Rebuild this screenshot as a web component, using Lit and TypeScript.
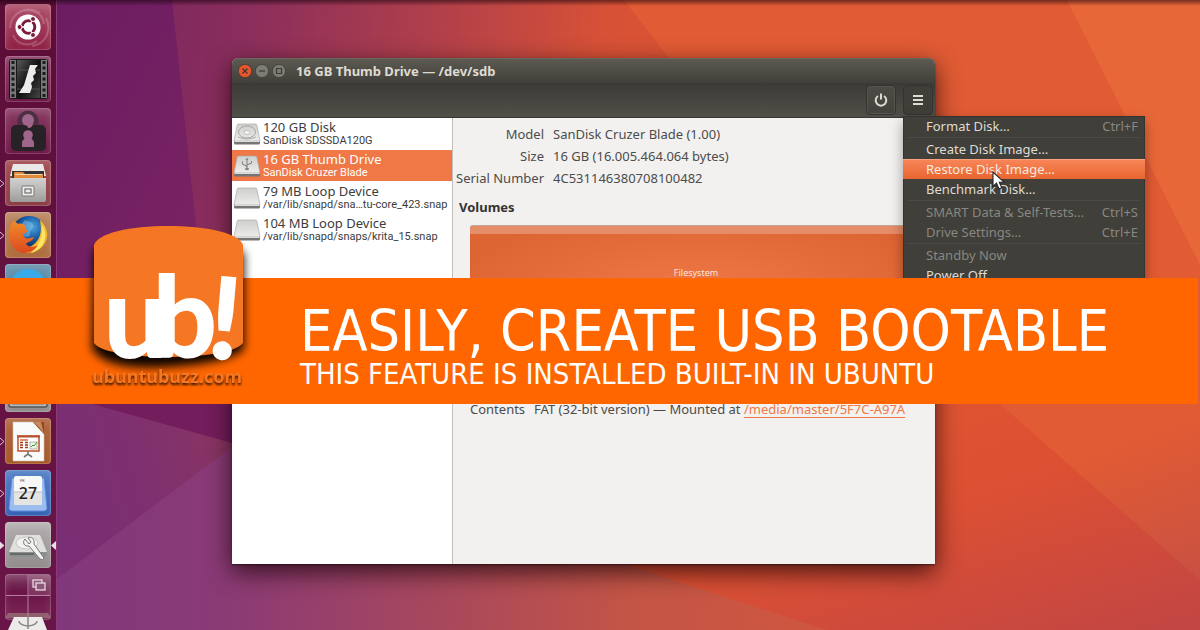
import { LitElement, html, css, svg, TemplateResult } from "lit";
import { customElement } from "lit/decorators.js";
import { classMap } from "lit/directives/class-map.js";

interface Launcher {
  label: string;
  tone: string;
  art: TemplateResult;
  running?: boolean;
  active?: boolean;
}

interface Disk {
  name: string;
  detail: string;
  kind: "hdd" | "usb" | "loop";
  selected?: boolean;
}

interface MenuEntry {
  label: string;
  keys?: string;
  disabled?: boolean;
  hover?: boolean;
  first?: boolean;
}

const dashArt = svg`
  <g fill="none" stroke="#fff" stroke-width="2" opacity=".2">
    <path d="M5 24C6 8 22 1 35 9M41 14c6 12 0 26-14 28M8 31c4 10 16 12 24 6M14 8c10-5 24 0 25 12"/>
  </g>
  <circle cx="23" cy="23" r="12.600" fill="#fff"/>
  <circle cx="23.500" cy="23" r="6.300" fill="none" stroke="#7a1c3e" stroke-width="3"/>
  <g stroke="#fff" stroke-width="1.400"><path d="M23.500 23H12M23.500 23L29 13.500M23.500 23L29 32.500"/></g>
  <circle cx="23.500" cy="23" r="4.600" fill="#fff"/>
  <g fill="#7a1c3e" stroke="#fff" stroke-width="1"><circle cx="14.600" cy="23" r="2.500"/><circle cx="28" cy="15" r="2.500"/><circle cx="28" cy="31" r="2.500"/></g>`;

const filmArt = svg`
  <rect x="4" y="3" width="39" height="40" rx="3" fill="#181818"/>
  <rect x="12" y="4" width="23" height="38" fill="url(#film)"/>
  <g fill="#77797b"><rect x="5" y="4" width="6" height="38"/><rect x="36" y="4" width="6" height="38"/></g>
  <g stroke="#1b1b1b" stroke-width="3" stroke-dasharray="3 2.500"><path d="M8 5v36M39 5v36"/></g>
  <path d="M12 14h23M12 33h23" stroke="#555" stroke-width=".8"/>
  <path d="M25 9h8l-3 4 1 4-3 3 1 4-3 3 1 4-2 6H14l5-8Z" fill="#ececea"/>`;

const lockArt = svg`
  <path d="M15 20v-6c0-12 16-12 16 0v6" fill="none" stroke="#4c2f42" stroke-width="5"/>
  <rect x="6" y="17" width="35" height="26" rx="5" fill="#262225"/>
  <circle cx="23" cy="12" r="6" fill="#a0658a"/><path d="m22 16 6-1c0 3-2 5-5 5Z" fill="#a0658a"/>
  <circle cx="23" cy="27" r="4.800" fill="#a0658a"/>
  <path d="M17 39v-4c0-3 3-4 3-6h6c0 2 3 3 3 6v4Z" fill="#a0658a"/>`;

const filesArt = svg`
  <path d="M8 4h30l3 12H5Z" fill="#e9e9e7"/>
  <rect x="7" y="11" width="32" height="9" fill="#333"/>
  <path d="M9 12h9l2 2h18v6H9Z" fill="#e28a3c"/><path d="M10 14h27v1H10Z" fill="#f8d9ae"/>
  <path d="M5 18h36v22q0 2-2 2H7q-2 0-2-2Z" fill="url(#steel)"/>
  <rect x="17" y="26" width="12" height="10" rx="1" fill="#eee" stroke="#777"/>
  <rect x="20" y="29" width="6" height="4" fill="none" stroke="#777" stroke-width="1.300"/>`;

const foxArt = svg`
  <circle cx="24" cy="22" r="18" fill="url(#globe)"/>
  <path d="M20 8c3 2 7 1 8 5s-4 5-3 9-7 4-9 0 0-10 4-14Z" fill="#8cc8ec" opacity=".45"/>
  <path d="M35 8c8 6 10 18 3 26-8 9-23 9-30-1 8 5 14 4 20 0 8-6 9-14 7-25Z" fill="#fbb82a"/>
  <path d="M37 13c4 6 4 13 1 19-3 5-8 8-12 9 7-7 12-15 11-28Z" fill="#fde56a"/>
  <path d="M8 9c2 0 4 2 5 3 3-1 6 0 8 2-1 2 0 4 2 5-2 2-5 2-5 4 1 3 4 4 7 3 2-1 4-1 4 0-3 4-7 4-8 6 3 4 9 3 12 1-4 8-16 11-23 4C3 31 1 19 8 9Z" fill="url(#fox)"/>`;

const skyArt = svg`<circle cx="23" cy="23" r="18" fill="#39a9e8"/>`;

const trayArt = svg`<rect x="4" y="6" width="38" height="35" rx="2" fill="#b9b9b7" stroke="#555" stroke-width="1.500"/><rect x="7" y="9" width="32" height="29" fill="none" stroke="#777"/>`;

const impressArt = svg`
  <path d="M8 4h20l11 12v27H8Z" fill="#fafafa" stroke="#c9c4bf" stroke-width=".6"/>
  <path d="M28 4h11v12Z" fill="#8f4a20"/><path d="M28 4q6 4 11 12l-3-12Z" fill="#c98a5e"/>
  <rect x="13" y="18" width="21" height="15" fill="#fff" stroke="#b9502d" stroke-width="1.500"/>
  <path d="M12 18.500h23" stroke="#b9502d" stroke-width="2"/>
  <g stroke-width="1.500"><path d="M15 22h8" stroke="#d66b3e"/><path d="M15 24.500h3M15 27h3M15 29.500h3M20 24.500h3M20 27h3M20 29.500h3" stroke="#a3361d"/></g>
  <rect x="25" y="24" width="7" height="7" fill="#eef7e6" stroke="#888" stroke-width=".6"/><path d="m26 29 2-2 1 1 3-4" fill="none" stroke="#3d9b38"/>
  <path d="M23 33v3m-4 3 4-3 4 3" fill="none" stroke="#777" stroke-width="1.600"/>`;

const calendarArt = svg`
  <path d="M7 8h32l3 30q0 3-3 3H7q-3 0-3-3Z" fill="#9bbdf0" stroke="#5b8ad8"/>
  <rect x="9" y="6" width="28" height="29" rx="2" fill="#f7f7f5"/>
  <path d="M9 22h28v11q0 2-2 2H11q-2 0-2-2Z" fill="#e4e4e2"/><path d="M9 22h28" stroke="#bbb"/>
  <text x="23" y="29" text-anchor="middle" font-family="Noto Sans, sans-serif" font-size="16" font-weight="500" fill="#222">27</text>
  <text x="15" y="12" font-family="Noto Sans, sans-serif" font-size="4" fill="#555">FR</text>`;

const disksArt = svg`
  <path d="M11 13h24l7 17v5H4v-5Z" fill="#e0e0de"/>
  <path d="M4 30h38v4q0 1-1 1H5q-1 0-1-1Z" fill="#8d9090"/><path d="M5 32h24" stroke="#444"/>
  <ellipse cx="22" cy="21" rx="11" ry="6" fill="#f2f2f0" stroke="#bbb" stroke-width=".8"/>
  <path d="M20 17c-3 3-1 8 4 7l11 13q3 2 4-1L29 22c1-5-3-8-6-6l3 4-2 2Z" fill="#f3f3f1" stroke="#777" stroke-width="1"/>`;

const workspaceArt = svg`
  <path d="M1 21.500h44M23 1v44" stroke="#b77fa0" stroke-width="1"/>
  <rect x="24" y="1" width="21" height="20" fill="#fff" opacity=".14"/>
  <g stroke="#e9d8e2" stroke-width="1.300" fill="#8d5778"><rect x="28" y="6" width="9" height="7"/><rect x="31" y="9" width="9" height="7"/></g>`;

const groups: Launcher[][] = [
  [
    { label: "Search your computer", tone: "dash", art: dashArt },
    { label: "Video editor", tone: "plum", art: filmArt },
    { label: "Passwords", tone: "plum", art: lockArt },
    { label: "Files", tone: "brick", art: filesArt, running: true },
    { label: "Firefox", tone: "tan", art: foxArt, running: true },
    { label: "Browser", tone: "sky", art: skyArt },
    { label: "Software", tone: "grey", art: trayArt },
  ],
  [
    { label: "Files tray", tone: "grey", art: trayArt },
    { label: "Impress", tone: "rust", art: impressArt, running: true },
    { label: "Calendar", tone: "blue", art: calendarArt, running: true },
    { label: "Disks", tone: "grey", art: disksArt, running: true, active: true },
    { label: "Workspaces", tone: "work", art: workspaceArt },
  ],
];

const disks: Disk[] = [
  { name: "120 GB Disk", detail: "SanDisk SDSSDA120G", kind: "hdd" },
  { name: "16 GB Thumb Drive", detail: "SanDisk Cruzer Blade", kind: "usb", selected: true },
  { name: "79 MB Loop Device", detail: "/var/lib/snapd/sna…tu-core_423.snap", kind: "loop" },
  { name: "104 MB Loop Device", detail: "/var/lib/snapd/snaps/krita_15.snap", kind: "loop" },
];

const menu: MenuEntry[] = [
  { label: "Format Disk…", keys: "Ctrl+F" },
  { label: "Create Disk Image…", first: true },
  { label: "Restore Disk Image…", hover: true },
  { label: "Benchmark Disk…" },
  { label: "SMART Data & Self-Tests…", keys: "Ctrl+S", disabled: true, first: true },
  { label: "Drive Settings…", keys: "Ctrl+E", disabled: true },
  { label: "Standby Now", disabled: true, first: true },
  { label: "Power Off…" },
];

const driveIcon = (kind: Disk["kind"]) => html`
  <svg class="drive" viewBox="0 0 28 24" aria-hidden="true">
    <defs><linearGradient id="lid" x2="0" y2="1"><stop stop-color="#cfcfcd"/><stop offset="1" stop-color="#ececea"/></linearGradient></defs>
    <path d="M1 18h26v3q0 1.500-1.500 1.500h-23Q1 22.500 1 21Z" fill="#757573"/>
    <path d="M5.500 2h17q1 0 1.300 1L27 19H1L4.200 3q.3-1 1.300-1Z" fill="url(#lid)" stroke="#a9a9a7" stroke-width=".7"/>
    <path d="M1.500 19.500h25" stroke="#fff" stroke-width=".7"/>
    ${kind === "hdd"
      ? svg`<ellipse cx="14" cy="10" rx="8.500" ry="6" fill="none" stroke="#a5a5a3"/><ellipse cx="14" cy="10.500" rx="3" ry="2" fill="#f8f8f8" stroke="#aaa" stroke-width=".7"/><path d="M5 15q9 4 18 0" fill="none" stroke="#aaa"/>`
      : kind === "usb"
        ? svg`<path d="M14 5v10M14 12.500 9.500 10V7.500M14 11l4.500-2V7" fill="none" stroke="#858583" stroke-width="1.100"/><path d="m12.500 6 1.500-2.500L15.500 6Z" fill="#858583"/><ellipse cx="14" cy="15" rx="2" ry="1.200" fill="#858583"/>`
        : ""}
  </svg>`;

@customElement("app-root")
export class AppRoot extends LitElement {
  static styles = css`
    :host {
      display: block;
      position: relative;
      height: 100vh;
      overflow: hidden;
      font-family: "Noto Sans", "Open Sans", sans-serif;
      font-size: 13px;
      color: #4c4c4c;
    }
    * { box-sizing: border-box; margin: 0; }
    button { border: 0; padding: 0; background: none; font: inherit; color: inherit; }
    svg { display: block; }
    .wallpaper { position: absolute; inset: 0; width: 100%; height: 100%; }
    .desktop { position: relative; display: flex; height: 100%; }
    .shade { position: absolute; inset: 0 0 auto; height: 6px; background: linear-gradient(rgba(20, 0, 10, 0.55), transparent); }

    .launcher {
      position: relative;
      flex: none;
      width: 57px;
      padding: 4px 5px 0;
      display: flex;
      flex-direction: column;
      gap: 4px;
      background: linear-gradient(#5b0d36, #641242 50%, #691548);
      border-right: 1px solid #8b3c78;
    }
    .group { display: flex; flex-direction: column; gap: 6px; }
    .tile {
      position: relative;
      width: 46px;
      height: 46px;
      flex: none;
      border-radius: 4px;
      box-shadow: inset 0 0 0 1px rgba(255, 255, 255, 0.16), inset 0 4px 8px rgba(255, 255, 255, 0.16);
    }
    .tile svg { width: 46px; height: 46px; }
    .dash { background: linear-gradient(#b0506c, #8e2044); }
    .plum { background: linear-gradient(#8a3b64, #6b1643); }
    .brick { background: linear-gradient(#a04a4f, #8c3c44); }
    .tan { background: linear-gradient(#b98560, #ad6c3d); }
    .sky { background: linear-gradient(#6792aa, #3c8ab4); }
    .grey { background: linear-gradient(#b4aeb0, #928c8d); }
    .rust { background: linear-gradient(#b06440, #a45622); }
    .blue { background: linear-gradient(#4f7cc4, #3561b2); }
    .work { background: linear-gradient(#7d3a60, #6a1447 40%, #7a2856); }
    .pip { position: absolute; top: 19px; left: -5px; width: 5px; height: 9px; }
    .tile .pip { width: 5px; height: 9px; }
    .tile .pip.here { left: 46px; }
    .folded { position: absolute; left: 5px; bottom: 0; width: 46px; height: 17px; }

    .window {
      position: absolute;
      inset: 58px 265px 66px 232px;
      display: flex;
      flex-direction: column;
      border-radius: 6px 6px 0 0;
      background: #f2f1ef;
      box-shadow: 0 8px 24px rgba(20, 0, 5, 0.75), 0 1px 2px rgba(0, 0, 0, 0.5);
    }
    .titlebar {
      height: 25px;
      display: flex;
      align-items: center;
      gap: 3px;
      padding: 0 6px;
      border-radius: 6px 6px 0 0;
      background: linear-gradient(#5d5b52, #403f3a);
      box-shadow: inset 0 1px #6b695f;
      color: #dfdbd2;
    }
    .ctl { width: 14px; height: 14px; }
    .title { margin-left: 7px; font-size: 13px; line-height: 20px; font-weight: 700; }
    .toolbar {
      height: 35px;
      display: flex;
      justify-content: flex-end;
      align-items: center;
      gap: 7px;
      padding: 0 2px;
      background: linear-gradient(#3b3a36, #504f48);
      border-bottom: 1px solid #38372f;
    }
    .tool {
      display: grid;
      place-items: center;
      width: 30px;
      height: 30px;
      border: 1px solid #34332f;
      border-radius: 4px;
      background: linear-gradient(#4c4b45, #43423d);
      box-shadow: inset 0 0 0 1px #55544d;
    }
    .tool.pressed { background: #3f3e39; box-shadow: none; }
    .tool svg { width: 16px; height: 16px; }
    .body { flex: 1; display: flex; min-height: 0; }
    .disks { width: 221px; flex: none; background: #fff; border-right: 1px solid #c3c0bc; list-style: none; padding: 0; display: flex; flex-direction: column; gap: 1px; }
    .disk { width: 100%; height: 31px; display: flex; align-items: center; gap: 2px; padding: 0 1px; text-align: left; color: #3c3c3c; }
    .disk.selected { background: #f07746; color: #fff; }
    .drive { width: 28px; height: 24px; flex: none; }
    .name { display: block; font-size: 13px; line-height: 15px; white-space: nowrap; }
    .detail { display: block; font-family: Roboto, "Noto Sans", sans-serif; font-size: 11px; line-height: 12px; white-space: nowrap; }

    .details { flex: 1; min-width: 0; padding: 5px 13px 0 3px; }
    .facts { display: grid; grid-template-columns: 88px 1fr; column-gap: 9px; line-height: 22px; }
    .facts dt { text-align: right; white-space: nowrap; }
    .facts dd { margin: 0; }
    .heading { margin: 8px 0 0 3px; font-size: 13px; line-height: 20px; font-weight: 700; color: #333; }
    .volume {
      margin: 8px 0 0 14px;
      height: 140px;
      padding-top: 40px;
      border-top: 1px solid #c4a79a;
      border-radius: 3px 3px 0 0;
      background: linear-gradient(#e58c68 8px, transparent 8px), radial-gradient(ellipse 260px 90px at 50% 75px, #f17b49, #dd6433);
      font-size: 9px;
      line-height: 13px;
      text-align: center;
      color: #fbe3d8;
    }
    .contents { display: flex; gap: 9px; margin: 34px 0 0 14px; line-height: 20px; white-space: nowrap; }
    .contents dd { margin: 0; }
    .contents a { color: #f07746; text-decoration: underline; text-underline-offset: 3px; }

    .menu {
      position: absolute;
      top: 58px;
      left: 671px;
      width: 242px;
      height: 200px;
      padding: 0;
      background: #403f3a;
      box-shadow: inset 0 0 0 1px #34332f, 0 6px 12px rgba(0, 0, 0, 0.35);
      color: #dfdbd2;
    }
    .entry { display: flex; justify-content: space-between; width: 100%; height: 20px; line-height: 20px; padding: 0 7px 0 23px; text-align: left; }
    .entry.off, .keys { color: #888780; }
    .entry.hover { background: linear-gradient(#f9875a, #e9652f); box-shadow: inset 0 1px #fba07c; color: #f6e9e2; }
    .rule { height: 1px; margin: 1px 4px; border: 0; background: #4b4a44; }
    .cursor { position: absolute; left: 992px; top: 171px; width: 13px; height: 19px; }

    .banner {
      position: absolute;
      left: 0;
      right: 2px;
      top: 278px;
      height: 126px;
      padding: 25px 20px 0 300px;
      background: #ff6600;
      color: #fff;
      font-family: "DejaVu Sans Condensed", "DejaVu Sans", sans-serif;
      white-space: nowrap;
    }
    .headline { font-size: 57px; line-height: 57px; font-weight: 400; }
    .sub { font-size: 29px; line-height: 28px; }
    .logo { position: absolute; left: 80px; top: 215px; width: 180px; height: 185px; overflow: visible; }
    .big { font: 700 112px Lato, "Open Sans", sans-serif; fill: #fff; stroke: #fff; stroke-width: 2px; }
    .site { font: 700 18px "Noto Sans", sans-serif; fill: #f57723; filter: drop-shadow(0 2px 1px rgba(0, 0, 0, 0.8)); }
  `;

  private tile(item: Launcher) {
    return html`<button class="tile ${item.tone}" aria-label=${item.label}>
      <svg viewBox="0 0 46 46" aria-hidden="true">
        <defs>
          <linearGradient id="film" x2="1" y2="1"><stop stop-color="#5a5a5a"/><stop offset=".5" stop-color="#111"/><stop offset="1" stop-color="#444"/></linearGradient>
          <linearGradient id="steel" x2="0" y2="1"><stop stop-color="#d2d2d0"/><stop offset="1" stop-color="#9d9d9b"/></linearGradient>
          <radialGradient id="globe" cx=".6" cy=".3"><stop stop-color="#4fa5dc"/><stop offset=".6" stop-color="#1d5fa8"/><stop offset="1" stop-color="#123a73"/></radialGradient>
          <linearGradient id="fox" x2="0" y2="1"><stop stop-color="#f08a2c"/><stop offset="1" stop-color="#dc4a1c"/></linearGradient>
        </defs>
        ${item.art}
      </svg>
      ${item.running
        ? html`<svg class="pip" viewBox="0 0 5 9"><path d="M0 1 4 4.500 0 8" fill=${item.active ? "#e8dfe4" : "none"} stroke="#d9c6d0"/></svg>`
        : ""}
      ${item.active ? html`<svg class="pip here" viewBox="0 0 5 9"><path d="M5 0 0 4.500 5 9Z" fill="#e8dfe4"/></svg>` : ""}
    </button>`;
  }

  render() {
    return html`
      <svg class="wallpaper" viewBox="0 0 1200 630" preserveAspectRatio="none" aria-hidden="true">
        <defs>
          <linearGradient id="base" gradientUnits="userSpaceOnUse" x1="60" y1="250" x2="1200" y2="380">
            <stop stop-color="#782461"/><stop offset=".14" stop-color="#8a2e5c"/><stop offset=".3" stop-color="#b03f4b"/>
            <stop offset=".45" stop-color="#d75136"/><stop offset=".6" stop-color="#dd5533"/><stop offset="1" stop-color="#e05a33"/>
          </linearGradient>
          <linearGradient id="left" gradientUnits="userSpaceOnUse" x1="57" y1="480" x2="240" y2="430"><stop stop-color="#7a2f74"/><stop offset=".4" stop-color="#7d2f70"/><stop offset="1" stop-color="#8b3660"/></linearGradient>
          <linearGradient id="low" gradientUnits="userSpaceOnUse" x1="57" y1="600" x2="826" y2="600"><stop stop-color="#81387c"/><stop offset=".22" stop-color="#8a3a75"/><stop offset=".42" stop-color="#a04464"/><stop offset=".75" stop-color="#c45545"/><stop offset="1" stop-color="#cf5640"/></linearGradient>
          <linearGradient id="dark" x2="1" y2="1"><stop stop-color="#691b62"/><stop offset="1" stop-color="#7f2662"/></linearGradient>
          <linearGradient id="bright" gradientUnits="userSpaceOnUse" x1="1000" y1="400" x2="1080" y2="620"><stop stop-color="#e15b34"/><stop offset=".35" stop-color="#e15b34"/><stop offset="1" stop-color="#c95142"/></linearGradient>
          <linearGradient id="red" gradientUnits="userSpaceOnUse" x1="960" y1="420" x2="1030" y2="660"><stop stop-color="#df5333"/><stop offset=".3" stop-color="#dc5033"/><stop offset="1" stop-color="#c44642"/></linearGradient>
        </defs>
        <rect width="1200" height="630" fill="url(#base)"/>
        <path d="M0 0H172L215 404L232 444 92 404 0 370Z" fill="url(#dark)"/>
        <path d="M92 404 232 444V380H90Z" fill="#741d5c"/>
        <path d="M0 378 92 404 232 443 600 630H0Z" fill="url(#left)"/>
        <path d="M57 579 232 447 640 560 826 630H57Z" fill="url(#low)"/>
        <path d="M624 0H1067L1200 265V590L1000 404 936 404Z" fill="url(#bright)"/>
        <path d="M1067 0H1200V265Z" fill="#e86739"/>
        <path d="M628 555 936 404H1000L1200 580V630H826L628 565Z" fill="url(#red)"/>
      </svg>
      <div class="desktop">
        <nav class="launcher" aria-label="Launcher">
          ${groups.map((g) => html`<div class="group">${g.map((i) => this.tile(i))}</div>`)}
          <svg class="folded" viewBox="0 0 46 17" aria-hidden="true">
            <path d="M3 0h40l3 5H0Z" fill="#a98" opacity=".5"/><path d="M9 4h28l5 13H3Z" fill="#ecebe9"/>
            <path d="M23 4v12M14 8q0 4 9 5 9-1 9-5" fill="none" stroke="#888" stroke-width="1.500"/>
          </svg>
        </nav>
        <div class="shade"></div>
        <main class="window">
          <header class="titlebar">
            ${[
              ["Close", "#e9562b", "M4.500 4.500l5 5m0-5-5 5"],
              ["Minimise", "#7d7b73", "M4 7h6"],
              ["Maximise", "#7d7b73", "M4.500 4.500h5v5h-5Z"],
            ].map(
              ([label, fill, d]) => html`<button class="ctl" aria-label=${label}>
                <svg viewBox="0 0 14 14"><circle cx="7" cy="7" r="6.600" fill=${fill} stroke="#33322e" stroke-width=".6"/><path d=${d} fill="none" stroke="#3a3934" stroke-width="1.200"/></svg>
              </button>`
            )}
            <h2 class="title">16 GB Thumb Drive — /dev/sdb</h2>
          </header>
          <div class="toolbar">
            <button class="tool" aria-label="Power">
              <svg viewBox="0 0 16 16"><path d="M5 4a5.300 5.300 0 1 0 6 0M8 1.500v6" fill="none" stroke="#dfdbd2" stroke-width="2"/></svg>
            </button>
            <button class="tool pressed" aria-label="Menu" aria-expanded="true">
              <svg viewBox="0 0 16 16"><path d="M3 4h10M3 8h10M3 12h10" stroke="#dfdbd2" stroke-width="2"/></svg>
            </button>
          </div>
          <div class="body">
            <ul class="disks">
              ${disks.map(
                (d) => html`<li><button class=${classMap({ disk: true, selected: !!d.selected })}>
                  ${driveIcon(d.kind)}<span><span class="name">${d.name}</span><span class="detail">${d.detail}</span></span>
                </button></li>`
              )}
            </ul>
            <section class="details">
              <dl class="facts">
                <dt>Model</dt><dd>SanDisk Cruzer Blade (1.00)</dd>
                <dt>Size</dt><dd>16 GB (16.005.464.064 bytes)</dd>
                <dt>Serial Number</dt><dd>4C531146380708100482</dd>
              </dl>
              <h3 class="heading">Volumes</h3>
              <div class="volume">Filesystem<br />16 GB FAT</div>
              <dl class="contents"><dt>Contents</dt><dd>FAT (32-bit version) — Mounted at <a href="#media">/media/master/5F7C-A97A</a></dd></dl>
            </section>
          </div>
          <div class="menu" role="menu">
            ${menu.map(
              (m) => html`${m.first ? html`<hr class="rule" />` : ""}
                <button role="menuitem" class=${classMap({ entry: true, off: !!m.disabled, hover: !!m.hover })} ?disabled=${m.disabled}>
                  <span>${m.label}</span>${m.keys ? html`<span class="keys">${m.keys}</span>` : ""}
                </button>`
            )}
          </div>
        </main>
        <svg class="cursor" viewBox="0 0 13 19" aria-hidden="true"><path d="M1 1v14.500l3.500-3.300 2.500 5.800 2.800-1.200-2.500-5.600H12Z" fill="#fff" stroke="#222" stroke-width="1.100"/></svg>
        <section class="banner">
          <h1 class="headline">EASILY, CREATE USB BOOTABLE</h1>
          <p class="sub">THIS FEATURE IS INSTALLED BUILT-IN IN UBUNTU</p>
        </section>
        <svg class="logo" viewBox="0 0 180 185" role="img" aria-label="ubuntubuzz.com">
          <defs>
            <filter id="soft" x="-30%" y="-30%" width="160%" height="160%"><feGaussianBlur stdDeviation="5"/></filter>
          </defs>
          <path d="M14 36Q40 22 88 22T164 38V134Q150 148 88 152T12 134Z" fill="#000" opacity=".95" filter="url(#soft)"/>
          <path d="M14 30C18 18 50 11 88 11s71 7 75 19v98c-8 10-44 14-75 14s-67-4-74-14Z" fill="#f57723"/>
          <text class="big" x="24 73 126" y="142" rotate="0 0 5">ub!</text>
          <text class="site" x="12" y="168">ubuntubuzz.com</text>
        </svg>
      </div>
    `;
  }
}
